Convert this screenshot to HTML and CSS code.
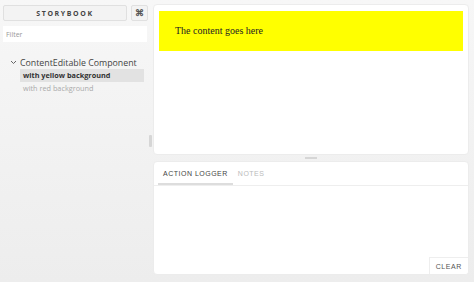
FILE: index.html
```html
<!DOCTYPE html>
<html lang="en">
<head>
  <meta charset="UTF-8">
  <title>Storybook</title>
  <link rel="stylesheet" href="styles.css">
</head>
<body>
  <div class="app">
    <aside class="sidebar">
      <div class="header">
        <button class="brand">STORYBOOK</button>
        <button class="shortcut">&#8984;</button>
      </div>
      <input class="filter" type="text" placeholder="Filter">
      <ul class="tree">
        <li class="kind">
          <svg class="chevron" width="7" height="5" viewBox="0 0 7 5"><path d="M1 1 L3.5 3.5 L6 1" fill="none" stroke="#666" stroke-width="1"/></svg>
          ContentEditable Component
        </li>
        <li class="story selected">with yellow background</li>
        <li class="story">with red background</li>
      </ul>
    </aside>
    <div class="vhandle"><span></span></div>
    <main class="main">
      <section class="preview">
        <div class="yellow">The content goes here</div>
      </section>
      <div class="hhandle"><span></span></div>
      <section class="addons">
        <nav class="tabs">
          <span class="tab active">ACTION LOGGER</span>
          <span class="tab">NOTES</span>
        </nav>
        <div class="log"></div>
        <button class="clear">CLEAR</button>
      </section>
    </main>
  </div>
</body>
</html>
```

FILE: styles.css
```css
body {
  margin: 0;
  font-family: "Open Sans", sans-serif;
}
.app {
  display: flex;
  height: 282px;
  background: linear-gradient(to bottom, #f7f7f7, #ededed);
}
.sidebar {
  width: 145px;
  padding: 5px 0 0 3px;
  flex-shrink: 0;
}
.header {
  display: flex;
  gap: 4px;
}
.brand {
  flex: 1;
  height: 16px;
  padding: 0;
  border: 1px solid #e0e0e0;
  border-radius: 2px;
  background: #f3f3f3;
  color: #444;
  font-family: "Open Sans", sans-serif;
  font-size: 7px;
  font-weight: bold;
  letter-spacing: 1.6px;
}
.shortcut {
  width: 17px;
  height: 16px;
  padding: 0;
  border: 1px solid #e0e0e0;
  border-radius: 2px;
  background: #f3f3f3;
  color: #555;
  font-size: 9px;
  font-weight: bold;
}
.filter {
  display: block;
  box-sizing: border-box;
  width: 144px;
  height: 16px;
  margin-top: 5px;
  padding: 0 3px;
  border: none;
  background: #fff;
  font-family: "Open Sans", sans-serif;
  font-size: 7px;
}
.filter::placeholder {
  color: #999;
}
.tree {
  list-style: none;
  margin: 14px 0 0;
  padding: 0;
}
.kind {
  display: flex;
  align-items: center;
  gap: 3px;
  height: 13px;
  padding-left: 7px;
  font-size: 8.8px;
  color: #444;
}
.story {
  height: 13px;
  line-height: 13px;
  margin: 0 4px 0 17px;
  padding-left: 3px;
  font-size: 7.3px;
  color: #aaa;
}
.story.selected {
  background: #e2e2e2;
  color: #333;
  font-weight: bold;
}
.vhandle {
  width: 5px;
  display: flex;
  align-items: center;
  justify-content: center;
}
.vhandle span {
  width: 3px;
  height: 12px;
  background: #d6d6d6;
  border-radius: 1px;
}
.main {
  flex: 1;
  display: flex;
  flex-direction: column;
  padding: 4px 5px 7px 0;
}
.preview {
  height: 151px;
  box-sizing: border-box;
  background: #fff;
  border: 1px solid #ececec;
  border-radius: 4px;
  padding: 6px 5px;
}
.yellow {
  height: 40px;
  box-sizing: border-box;
  background: #ffff00;
  padding: 14px 16px 0;
  font-family: "Liberation Serif", serif;
  font-size: 10px;
  color: #222;
}
.hhandle {
  height: 6px;
  display: flex;
  align-items: center;
  justify-content: center;
}
.hhandle span {
  width: 12px;
  height: 2px;
  background: #d6d6d6;
}
.addons {
  flex: 1;
  display: flex;
  flex-direction: column;
  background: #fff;
  border: 1px solid #ececec;
  border-radius: 4px;
  overflow: hidden;
}
.tabs {
  display: flex;
  height: 23px;
  border-bottom: 1px solid #eee;
  padding-left: 4px;
}
.tab {
  padding: 8px 5px 0;
  font-family: "Liberation Sans", sans-serif;
  font-size: 7px;
  letter-spacing: 0.5px;
  color: #bbb;
}
.tab.active {
  color: #444;
  border-bottom: 2px solid #ddd;
}
.log {
  flex: 1;
}
.clear {
  align-self: flex-end;
  height: 17px;
  padding: 0 6px;
  border: none;
  border-top: 1px solid #eee;
  border-left: 1px solid #eee;
  background: #fff;
  font-family: "Liberation Sans", sans-serif;
  font-size: 7px;
  letter-spacing: 0.6px;
  color: #555;
}
```
